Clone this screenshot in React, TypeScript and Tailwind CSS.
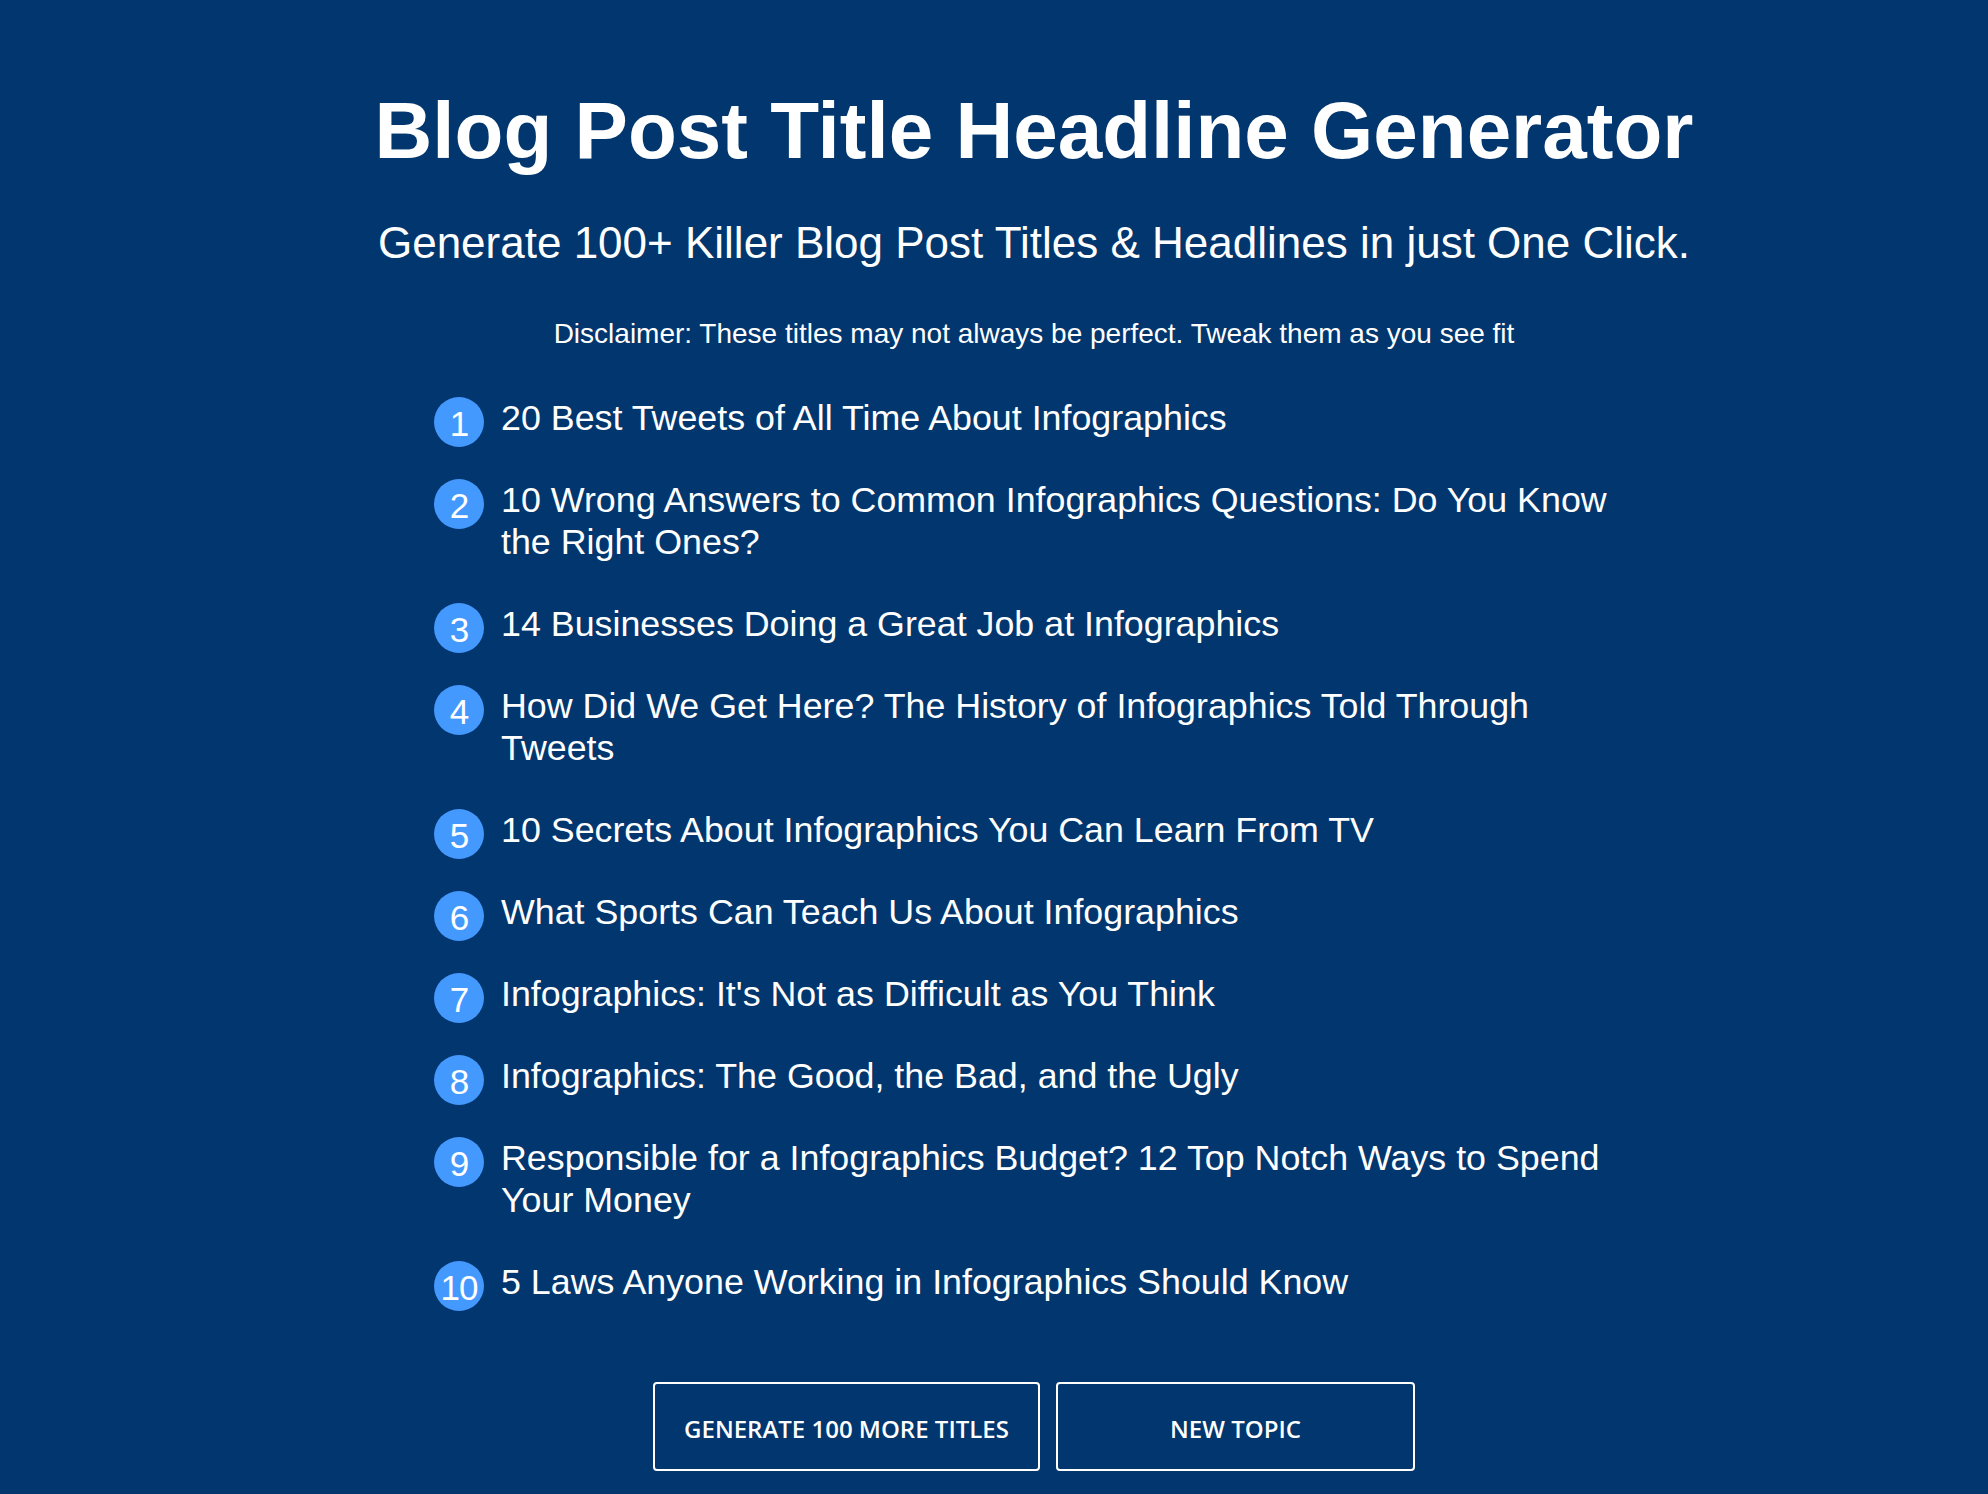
import React from "react";

const titles: string[] = [
  "20 Best Tweets of All Time About Infographics",
  "10 Wrong Answers to Common Infographics Questions: Do You Know the Right Ones?",
  "14 Businesses Doing a Great Job at Infographics",
  "How Did We Get Here? The History of Infographics Told Through Tweets",
  "10 Secrets About Infographics You Can Learn From TV",
  "What Sports Can Teach Us About Infographics",
  "Infographics: It's Not as Difficult as You Think",
  "Infographics: The Good, the Bad, and the Ugly",
  "Responsible for a Infographics Budget? 12 Top Notch Ways to Spend Your Money",
  "5 Laws Anyone Working in Infographics Should Know",
];

export default function App() {
  return (
    <div className="min-h-screen bg-[#02366e] pl-[80px] text-white font-['Liberation_Sans',Arial,sans-serif]">
      <div className="flex flex-col items-center pt-[83px] pb-[23px]">
        <h1 className="text-[80px] font-bold leading-[96px]">Blog Post Title Headline Generator</h1>
        <p className="mt-[37px] text-[44px] leading-[53px]">
          Generate 100+ Killer Blog Post Titles &amp; Headlines in just One Click.
        </p>
        <p className="mt-[48px] text-[28px] leading-[34px]">
          Disclaimer: These titles may not always be perfect. Tweak them as you see fit
        </p>

        <ol className="mt-[46px] flex w-[1200px] flex-col gap-[40px]">
          {titles.map((title, i) => (
            <li key={i} className="flex items-start gap-[17px]">
              <span className="mb-[-8px] flex h-[50px] w-[50px] shrink-0 items-center justify-center rounded-full bg-[#4499ff] pt-[3px] text-[35px] leading-none tracking-[-1px]">
                {i + 1}
              </span>
              <span className="text-[35.8px] leading-[42px]">{title}</span>
            </li>
          ))}
        </ol>

        <div className="mt-[79px] flex gap-[16px] font-['Open_Sans',sans-serif]">
          <button
            type="button"
            className="h-[89px] w-[387px] rounded-[4px] border-2 border-white pt-[4px] text-[24px] font-semibold uppercase"
          >
            Generate 100 More Titles
          </button>
          <button
            type="button"
            className="h-[89px] w-[359px] rounded-[4px] border-2 border-white pt-[4px] text-[24px] font-semibold uppercase"
          >
            New Topic
          </button>
        </div>
      </div>
    </div>
  );
}
